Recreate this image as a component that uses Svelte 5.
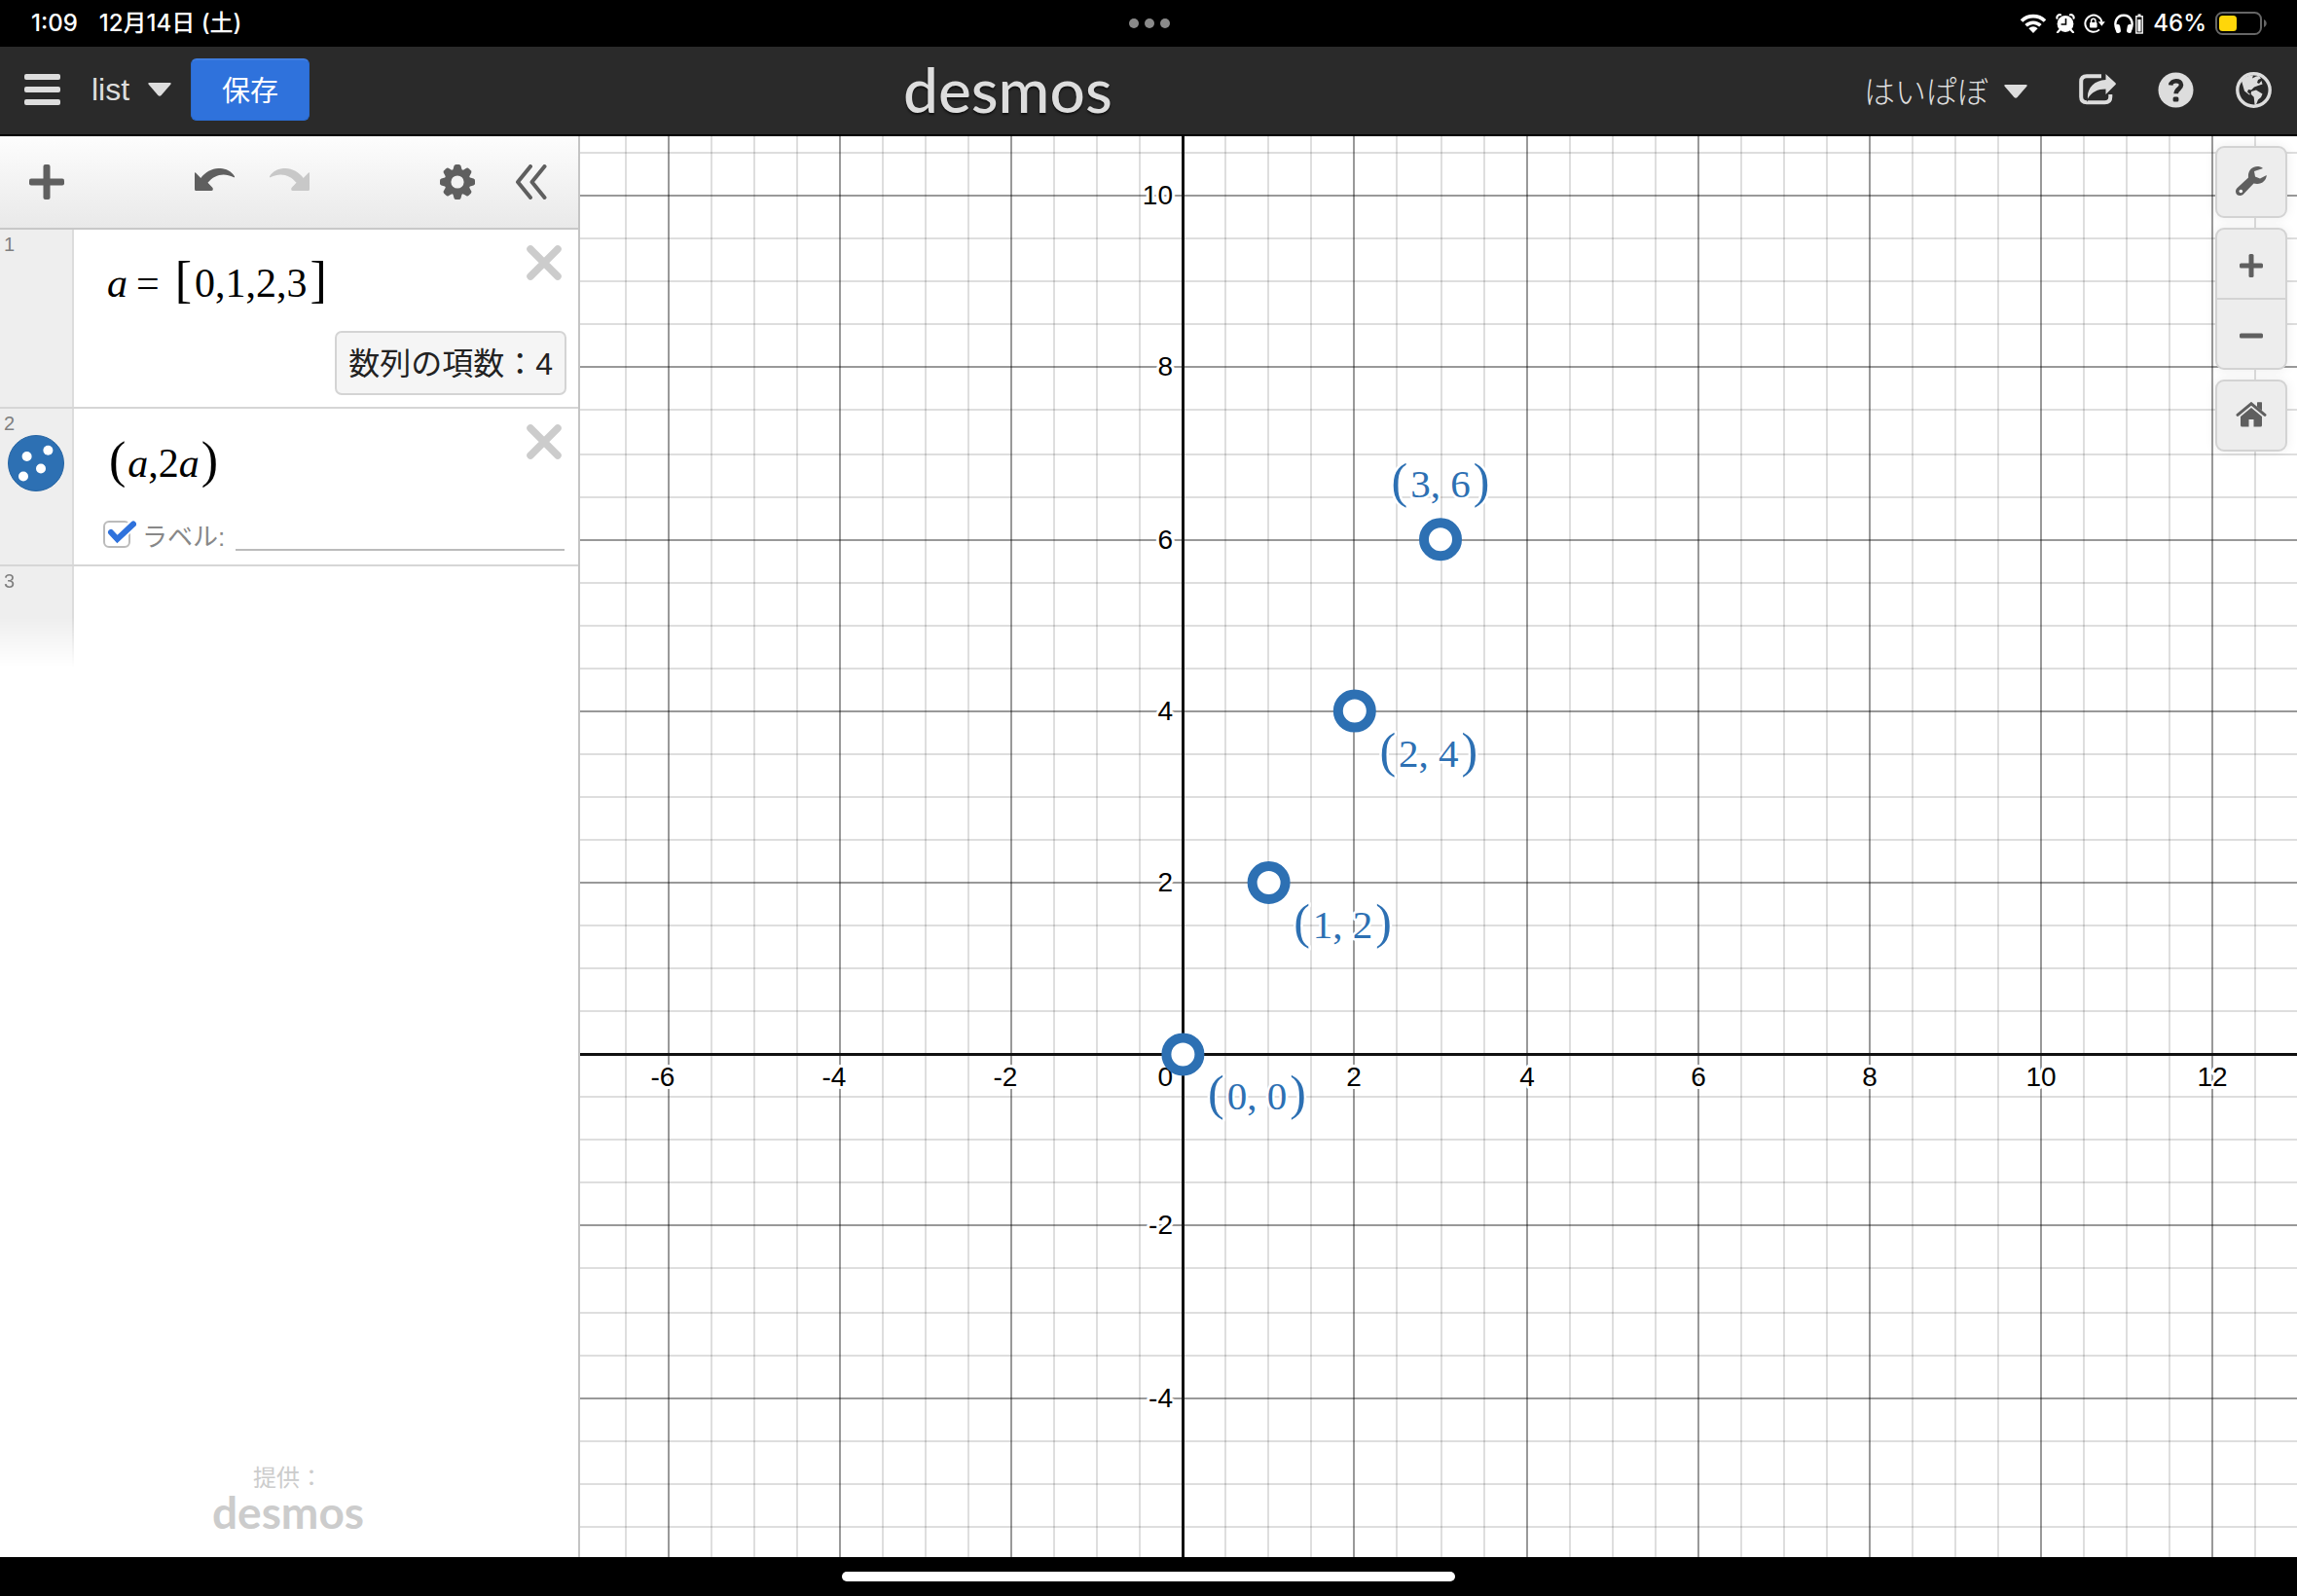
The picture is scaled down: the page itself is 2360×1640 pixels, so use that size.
<script>
  const UNIT = 88.2;
  const ORIGIN_X = 619.4;
  const ORIGIN_Y = 943.4;

  let graphWidth = $state(1764);
  let graphHeight = $state(1460);

  // Grid lines sit on odd pixels so that each 2px stroke stays crisp.
  const snap = (value) => Math.floor(value / 2) * 2 + 1;

  function gridLines(origin, size, direction) {
    const half = UNIT / 2;
    const first = Math.ceil((4 - origin) / half);
    const last = Math.floor((size - origin) / half);
    const lines = [];
    for (let i = first; i <= last; i++) {
      if (i === 0) continue;
      lines.push({ at: snap(origin + i * half), value: (direction * i) / 2, major: i % 4 === 0 });
    }
    return lines;
  }

  const vertical = $derived(gridLines(ORIGIN_X, graphWidth, 1));
  const horizontal = $derived(gridLines(ORIGIN_Y, graphHeight, -1));

  const points = [
    { x: 0, y: 0, dx: 76, dy: 57 },
    { x: 1, y: 2, dx: 76, dy: 57 },
    { x: 2, y: 4, dx: 76, dy: 57 },
    { x: 3, y: 6, dx: 0, dy: -43 }
  ];
  const px = (x) => ORIGIN_X + x * UNIT;
  const py = (y) => ORIGIN_Y - y * UNIT;
</script>

<div class="screen">
  <div class="status">
    <div class="status-left"><span>1:09</span><span>12月14日 (土)</span></div>
    <svg class="dots" width="42" height="10" viewBox="0 0 42 10" aria-hidden="true">
      <circle cx="5" cy="5" r="5" /><circle cx="21" cy="5" r="5" /><circle cx="37" cy="5" r="5" />
    </svg>
    <div class="status-right">
      <svg width="28" height="20" viewBox="0 0 28 20" aria-label="Wi-Fi">
        <path d="M2 7.5a17.2 17.2 0 0 1 24 0M6.6 12.2a10.6 10.6 0 0 1 14.8 0" fill="none" stroke="#fff" stroke-width="3.6" />
        <path d="M14 20l-4.6-4.8a6.6 6.6 0 0 1 9.2 0z" fill="#fff" />
      </svg>
      <svg width="20" height="20" viewBox="0 0 20 20" aria-label="アラーム">
        <circle cx="10" cy="10.5" r="8.4" fill="#fff" />
        <path d="M1.400 4.600a3 3 0 0 1 3.600-3.400M18.600 4.600a3 3 0 0 0-3.600-3.400M4 17l-2 2.200M16 17l2 2.200" stroke="#fff" stroke-width="2.2" stroke-linecap="round" fill="none" />
        <path d="M10.5 5v6H5.6" fill="none" stroke="#000" stroke-width="1.6" />
      </svg>
      <svg width="22" height="20" viewBox="0 0 22 20" aria-label="画面の向きのロック">
        <path d="M18.4 8.5A8.6 8.6 0 1 0 16 16.4" fill="none" stroke="#fff" stroke-width="2" />
        <path d="M14.8 8.2h7l-3.4 4.6z" fill="#fff" />
        <rect x="6" y="9" width="7.6" height="5.6" rx="1" fill="#fff" />
        <path d="M7.6 9V7.4a2.2 2.2 0 0 1 4.4 0V9" fill="none" stroke="#fff" stroke-width="1.4" />
      </svg>
      <svg width="31" height="21" viewBox="0 0 31 21" aria-label="ヘッドフォン">
        <path d="M3 17C-1 9 3 1.8 10 1.8S21 9 17 17" fill="none" stroke="#fff" stroke-width="2.4" />
        <rect x="1.6" y="11" width="5" height="9" rx="2.2" fill="#fff" transform="rotate(-10 4 15.5)" />
        <rect x="13.4" y="11" width="5" height="9" rx="2.2" fill="#fff" transform="rotate(10 16 15.5)" />
        <rect x="22.8" y="2.8" width="6.4" height="17.2" fill="none" stroke="#fff" stroke-width="1.4" />
        <path d="M24.4 6h3.2v12.4h-3.2zM24.5.6h3v1.4h-3z" fill="#fff" />
      </svg>
      <span class="percent">46%</span>
      <svg width="54" height="24" viewBox="0 0 54 24" aria-label="バッテリー">
        <rect x="1" y="1" width="46" height="22" rx="6.5" fill="none" stroke="#666" stroke-width="2" />
        <rect x="4" y="4" width="18" height="16" rx="3.5" fill="#ffd60a" />
        <path d="M50 8c3.6 1.4 3.6 6.6 0 8z" fill="#666" />
      </svg>
    </div>
  </div>

  <header>
    <div class="head-left">
      <button class="plain" aria-label="メニュー">
        <svg width="37" height="33" viewBox="0 0 37 33" fill="#ddd">
          <rect width="37" height="6" rx="2" /><rect y="13" width="37" height="6" rx="2" /><rect y="26" width="37" height="6" rx="2" />
        </svg>
      </button>
      <button class="plain title">list
        <svg width="24" height="14" viewBox="0 0 24 14" fill="#ddd"><path d="M1.5 0h21q2 0 .8 1.8L13.6 13q-1.6 1.6-3.2 0L.7 1.8Q-.5 0 1.5 0z" /></svg>
      </button>
      <button class="save">保存</button>
    </div>
    <a class="logo" href="#home">desmos</a>
    <div class="head-right">
      <button class="plain account">はいぱぼ
        <svg width="24" height="18" viewBox="0 -4 24 18" fill="#ddd"><path d="M1.5 0h21q2 0 .8 1.8L13.6 13q-1.6 1.6-3.2 0L.7 1.8Q-.5 0 1.5 0z" /></svg>
      </button>
      <button class="plain" aria-label="共有">
        <svg width="38" height="32" viewBox="0 0 38 32">
          <path d="M23 2.3H8Q2.2 2.3 2.2 8v15.500Q2.200 29.300 8 29.300h18.500Q32.300 29.300 32.300 23.500V21" fill="none" stroke="#ddd" stroke-width="4" />
          <path d="M27.500 0L37.500 9.300Q38.300 10.200 37.500 11L27.500 21v-5.500C19 15.500 13 18.500 9 25.500 8 15 15 6.800 27.500 6z" fill="#ddd" stroke="#2a2a2a" stroke-width="2" paint-order="stroke" />
        </svg>
      </button>
      <button class="plain" aria-label="ヘルプ">
        <svg width="37" height="37" viewBox="0 0 37 37">
          <circle cx="18.500" cy="18.500" r="18" fill="#ddd" />
          <path d="M13.200 13.500c.4-5.600 10.800-5.800 10.800-.2 0 4.200-5.300 4-5.300 9" fill="none" stroke="#2a2a2a" stroke-width="4.600" />
          <rect x="15.600" y="25.500" width="5.800" height="5" rx="1.500" fill="#2a2a2a" />
        </svg>
      </button>
      <button class="plain" aria-label="言語">
        <svg width="37" height="37" viewBox="0 0 37 37">
          <circle cx="18.500" cy="18.500" r="16.700" fill="none" stroke="#ddd" stroke-width="3.400" />
          <path d="M6 9Q11 3 18 3.500l-1 3 4-2 3-.5 2 2.500-3 1.500-1 3 2 1 2.500-3 1 3.500-4.500 1.500-4 1.500-3 3-3-.5-1 2.500 3 2.500-1 .500-5-4z" fill="#ddd" />
          <path d="M16 20l5-1.600 6.500 4.200-1.500 3.500-3 2.500-2 4.800-1.500-.2-.8-7.500-3-3z" fill="#ddd" />
        </svg>
      </button>
    </div>
  </header>

  <main>
    <aside>
      <div class="toolbar">
        <button class="plain" aria-label="追加">
          <svg width="36" height="36" viewBox="0 0 36 36" fill="#5f5f5f"><rect x="14.500" width="7" height="36" rx="2" /><rect y="14.500" width="36" height="7" rx="2" /></svg>
        </button>
        <div class="history">
          <button class="plain" aria-label="元に戻す">
            <svg width="42" height="24" viewBox="0 0 42 24" fill="#5f5f5f"><path d="M0 4.800Q0 3.600 1 4.600L6.300 10C15-2 33-4 41 8.200q.3 1.500-1.200.8C30 4 20 6.500 13.500 14.800l5 5.200q1 3-1.500 3H1.500Q0 23 0 21.500z" /></svg>
          </button>
          <button class="plain" aria-label="やり直す" disabled>
            <svg width="42" height="24" viewBox="0 0 42 24" fill="#c8c8c8"><path d="M42 4.800Q42 3.600 41 4.600L35.700 10C27-2 9-4 1 8.200q-.3 1.500 1.200.8C12 4 22 6.500 28.500 14.800l-5 5.200q-1 3 1.500 3h15.500q1.500 0 1.500-1.500z" /></svg>
          </button>
        </div>
        <div class="tools">
          <button class="plain" aria-label="設定">
            <svg width="36" height="36" viewBox="-18 -18 36 36" fill="#5f5f5f">
              {#each [0, 45, 90, 135] as angle}
                <path d="M-4.500-13l1-3.500q.5-1.500 2-1.500h3q1.500 0 2 1.500l1 3.500v26l-1 3.500q-.5 1.500-2 1.500h-3q-1.500 0-2-1.500l-1-3.500z" transform="rotate({angle})" />
              {/each}
              <circle r="13.500" /><circle r="6.600" fill="#f2f2f2" />
            </svg>
          </button>
          <button class="plain" aria-label="数式リストを隠す">
            <svg width="33" height="36" viewBox="0 0 33 36"><path d="M16 2L3 18l13 16M30.500 2l-13 16 13 16" fill="none" stroke="#5f5f5f" stroke-width="4" stroke-linecap="round" stroke-linejoin="round" /></svg>
          </button>
        </div>
      </div>

      <section class="row first">
        <div class="gutter">1</div>
        <div class="content">
          <div class="math"><i>a</i><span class="eq">=</span><span class="fence">[</span><span class="inside">0,1,2,3</span><span class="fence">]</span></div>
          <output class="badge">数列の項数：4</output>
          <button class="plain close" aria-label="削除">
            <svg width="36" height="36" viewBox="0 0 36 36"><path d="M4 4l28 28M32 4L4 32" stroke="#ccc" stroke-width="7.500" stroke-linecap="round" /></svg>
          </button>
        </div>
      </section>

      <section class="row second">
        <div class="gutter">2
          <button class="plain color" aria-label="点のスタイル">
            <svg width="58" height="58" viewBox="0 0 58 58">
              <circle cx="29" cy="29" r="28.500" fill="#2d70b3" stroke="#2765a3" />
              <g fill="#fff"><circle cx="19.600" cy="22" r="5" /><circle cx="41.400" cy="15.700" r="5" /><circle cx="34" cy="34.500" r="5" /><circle cx="16" cy="42.500" r="5" /></g>
            </svg>
          </button>
        </div>
        <div class="content">
          <div class="math pair"><span class="fence">(</span><span><i>a</i>,2<i>a</i></span><span class="fence">)</span></div>
          <div class="label-row">
            <label class="check">
              <span class="tick">
                <input type="checkbox" checked />
                <svg width="34" height="30" viewBox="0 0 34 30" aria-hidden="true">
                  <path d="M8 13l6.500 7L30 5" fill="none" stroke="#fff" stroke-width="10" />
                  <path d="M8 13l6.500 7L31 4.500" fill="none" stroke="#2f72dc" stroke-width="6" stroke-linecap="round" />
                </svg>
              </span>
              ラベル:
            </label>
            <input class="label-text" type="text" aria-label="ラベル" />
          </div>
          <button class="plain close" aria-label="削除">
            <svg width="36" height="36" viewBox="0 0 36 36"><path d="M4 4l28 28M32 4L4 32" stroke="#ccc" stroke-width="7.500" stroke-linecap="round" /></svg>
          </button>
        </div>
      </section>

      <section class="row third">
        <div class="gutter">3</div>
      </section>

      <footer>
        <span>提供：</span>
        <span class="mark">desmos</span>
      </footer>
    </aside>

    <div class="graph" bind:clientWidth={graphWidth} bind:clientHeight={graphHeight}>
      <svg class="plot" aria-label="グラフ">
        {#each vertical as line}
          <line class:major={line.major} class="grid" x1={line.at} x2={line.at} y1="0" y2={graphHeight} />
        {/each}
        {#each horizontal as line}
          <line class:major={line.major} class="grid" x1="0" x2={graphWidth} y1={line.at} y2={line.at} />
        {/each}
        <line class="axis" x1="619.500" x2="619.500" y1="0" y2={graphHeight} />
        <line class="axis" x1="0" x2={graphWidth} y1="943.500" y2="943.500" />

        <g class="ticks">
          {#each vertical.filter((l) => l.major) as line}
            <text x={line.value < 0 ? line.at - 6 : line.at} y="976" text-anchor="middle">{line.value}</text>
          {/each}
          {#each horizontal.filter((l) => l.major) as line}
            <text x="609" y={line.at + 9} text-anchor="end">{line.value}</text>
          {/each}
          <text x="609" y="976" text-anchor="end">0</text>
        </g>

        {#each points as p}
          <circle class="point" cx={px(p.x)} cy={py(p.y)} r="17" />
          <text class="point-label" x={px(p.x) + p.dx} y={py(p.y) + p.dy} text-anchor="middle"><tspan class="paren">(</tspan><tspan dx="3">{p.x}, {p.y}</tspan><tspan class="paren" dx="3">)</tspan></text>
        {/each}
      </svg>

      <div class="controls">
        <button class="control" aria-label="グラフ設定">
          <svg width="34" height="34" viewBox="0 0 34 34">
            <path d="M29 4C23-.5 13 3 14 13.500L2.200 24.500C-1.500 29 4 34.500 8.500 31L19.500 19.500C27 21.500 32.500 17 32.800 11L26 14.500l-5-2-1-5.500z" fill="#5f5f5f" />
            <circle cx="6.300" cy="27.500" r="1.800" fill="#fff" />
          </svg>
        </button>
        <div class="zoom">
          <button aria-label="拡大"><svg width="24" height="24" viewBox="0 0 24 24" fill="#5f5f5f"><rect x="9.500" width="5" height="24" rx="1.500" /><rect y="9.500" width="24" height="5" rx="1.500" /></svg></button>
          <button aria-label="縮小"><svg width="24" height="24" viewBox="0 0 24 24" fill="#5f5f5f"><rect y="9.500" width="24" height="5" rx="1.500" /></svg></button>
        </div>
        <button class="control" aria-label="標準の表示">
          <svg width="32" height="26" viewBox="0 0 32 26">
            <path d="M22 6.500V1.500Q22 .5 23 .5h3q1 0 1 1V11M5 13.500L16 4.500l11 9V24q0 1.500-1.500 1.500H18.500V18h-5v7.500H6.500Q5 25.500 5 24z" fill="#5f5f5f" />
            <path d="M1.500 14.500L16 2.500l14.500 12" fill="none" stroke="#ededed" stroke-width="5.500" />
            <path d="M22 .5h5V9l-5-4z" fill="#5f5f5f" />
            <path d="M2 13.300L16 1.800l14 11.500" fill="none" stroke="#5f5f5f" stroke-width="3" stroke-linecap="round" />
          </svg>
        </button>
      </div>
    </div>
  </main>

  <div class="home-bar"><span></span></div>
</div>

<style>
  :global(body) { background: #000; }
  * { box-sizing: border-box; }
  .screen {
    display: flex;
    flex-direction: column;
    min-height: 100vh;
    background: #fff;
    font-family: "Liberation Sans", "Noto Sans CJK JP", sans-serif;
  }
  svg { display: block; }
  button { font: inherit; cursor: pointer; }
  .plain { display: flex; align-items: center; padding: 0; border: 0; background: none; color: #ddd; }

  .status {
    display: grid;
    grid-template-columns: 1fr auto 1fr;
    align-items: center;
    height: 48px;
    padding: 0 30px 0 32px;
    background: #000;
    color: #fff;
    font: 500 24px/48px Inter, "Noto Sans CJK JP", sans-serif;
  }
  .status-left { display: flex; gap: 22px; }
  .status-right { display: flex; justify-content: flex-end; align-items: center; gap: 9px; }
  .dots { fill: #8a8a8a; }

  header {
    display: grid;
    grid-template-columns: 93fr auto 122fr;
    align-items: center;
    height: 92px;
    padding-bottom: 2px;
    background: #2a2a2a;
    border-bottom: 2px solid #000;
    color: #ddd;
    font-size: 32px;
  }
  .head-left { display: flex; align-items: center; padding-left: 25px; }
  .title { gap: 19px; margin: 0 20px 0 32px; }
  .save {
    height: 64px;
    padding: 0 31px 3px;
    border: 1px solid #2b6bd0;
    border-top: 2px solid #3f7de0;
    border-radius: 6px;
    background: #2f72dc;
    color: #fff;
    font-size: 29px;
  }
  .logo {
    font: 500 64px/64px Lato, sans-serif;
    color: #ddd;
    text-decoration: none;
    text-shadow: 0 2px 2px #111;
  }
  .head-right { display: flex; justify-content: flex-end; align-items: center; gap: 43px; padding-right: 26px; }
  .account { gap: 16px; margin-right: 10px; font-weight: 300; }

  main { display: flex; flex: 1; min-height: 0; }
  aside {
    display: flex;
    flex-direction: column;
    width: 596px;
    flex: none;
    border-right: 2px solid #c4c4c4;
    background: #fff;
  }
  .toolbar {
    display: flex;
    align-items: center;
    height: 96px;
    padding: 0 32px 0 30px;
    background: linear-gradient(#fdfdfd, #e9e9e9);
    border-bottom: 2px solid #c8c8c8;
  }
  .history { display: flex; gap: 34px; margin-left: 134px; padding-bottom: 4px; }
  .tools { display: flex; gap: 41px; margin-left: auto; }

  .row { display: flex; border-bottom: 2px solid #d6d6d6; }
  .first { min-height: 184px; }
  .second { min-height: 162px; }
  .third { height: 104px; border: 0; }
  .gutter {
    width: 76px;
    padding: 3px 4px;
    background: #eee;
    border-right: 2px solid #dcdcdc;
    color: #808080;
    font-size: 20px;
    line-height: 24px;
  }
  .third .gutter {
    -webkit-mask-image: linear-gradient(#000 50%, transparent);
    mask-image: linear-gradient(#000 50%, transparent);
  }
  .color { margin-left: 4px; }
  .content {
    position: relative;
    display: flex;
    flex: 1;
    flex-direction: column;
    padding: 22px 12px 12px 34px;
  }
  .math {
    display: flex;
    align-items: baseline;
    height: 60px;
    color: #000;
    font: 42px/60px "Liberation Serif", serif;
  }
  .fence { font-size: 52px; }
  .eq { margin: 0 16px 0 9px; }
  .inside { padding: 0 3px; }
  .pair { gap: 2px; padding: 1px 0 0 2px; }
  .badge {
    align-self: flex-end;
    margin-top: 22px;
    padding: 2px 12px 0;
    border: 2px solid #d4d4d4;
    border-radius: 7px;
    background: #f5f5f5;
    color: #222;
    font-size: 32px;
    line-height: 60px;
  }
  .close { position: absolute; top: 16px; right: 17px; }
  .label-row { display: flex; align-items: center; gap: 11px; padding-right: 2px; margin-left: -4px; margin-top: 28px; }
  .check { display: flex; align-items: center; gap: 12px; height: 36px; padding-top: 2px; color: #888; font-size: 26px; }
  .tick { position: relative; width: 28px; height: 28px; }
  .tick input {
    display: block;
    width: 28px;
    height: 28px;
    margin: 0;
    appearance: none;
    border: 2px solid #bbb;
    border-radius: 6px;
    background: #fff;
  }
  .tick svg { position: absolute; top: -1px; left: 0; pointer-events: none; }
  .label-text {
    flex: 1;
    min-width: 0;
    height: 36px;
    padding: 0;
    border: 0;
    border-bottom: 2px solid #bbb;
    outline: 0;
    background: none;
    font-size: 26px;
  }
  footer {
    display: flex;
    flex-direction: column;
    align-items: center;
    margin-top: auto;
    padding: 0 2px 26px 0;
    color: #ccc;
    font-size: 24px;
    line-height: 30px;
  }
  .mark { font: 700 46px/40px Lato, sans-serif; }

  .graph { position: relative; flex: 1; min-width: 0; overflow: hidden; }
  .plot { position: absolute; width: 100%; height: 100%; }
  .grid { stroke: #000; stroke-opacity: 0.13; stroke-width: 2; }
  .major { stroke-opacity: 0.4; }
  .axis { stroke: #111; stroke-width: 3; }
  .ticks { font-size: 28px; paint-order: stroke; stroke: #fff; stroke-width: 6px; stroke-linejoin: round; }
  .point { fill: #fff; stroke: #2d70b3; stroke-width: 10; }
  .point-label {
    font: 41px "Liberation Serif", serif;
    fill: #2d70b3;
    paint-order: stroke;
    stroke: #fff;
    stroke-width: 5px;
    stroke-linejoin: round;
  }
  .paren { font-size: 50px; }

  .controls { position: absolute; top: 10px; right: 10px; display: flex; flex-direction: column; gap: 10px; }
  .control, .zoom {
    display: flex;
    align-items: center;
    justify-content: center;
    width: 74px;
    height: 74px;
    padding: 0 0 2px;
    border: 2px solid #d3d3d3;
    border-radius: 9px;
    background: #ededed;
    box-shadow: 0 0 12px rgba(0, 0, 0, 0.08);
  }
  .zoom { flex-direction: column; height: 146px; padding: 0; }
  .zoom button {
    display: flex;
    flex: 1;
    align-items: center;
    justify-content: center;
    width: 100%;
    padding: 4px 0 0;
    border: 0;
    background: none;
  }
  .zoom button + button { border-top: 2px solid #d3d3d3; }

  .home-bar { display: flex; align-items: center; justify-content: center; height: 40px; background: #000; }
  .home-bar span { width: 630px; height: 10px; border-radius: 5px; background: #fff; }
</style>
